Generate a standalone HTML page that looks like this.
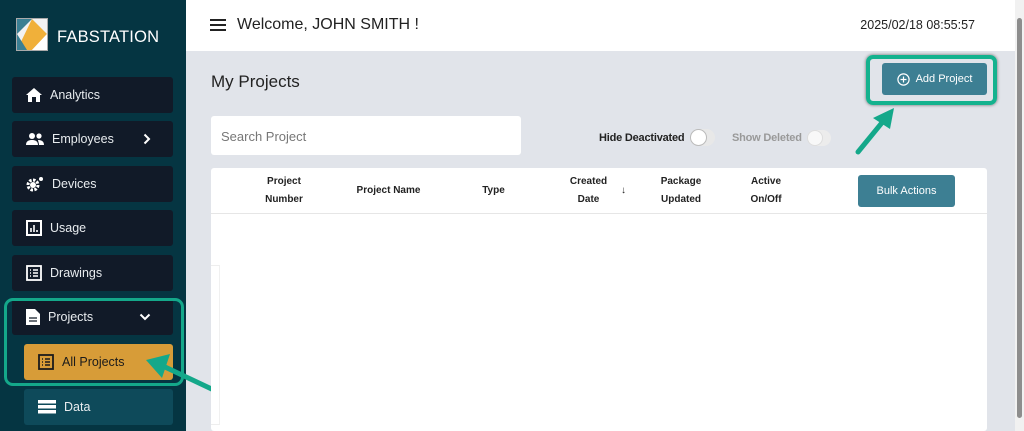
<!DOCTYPE html>
<html><head><style>
*{box-sizing:border-box;margin:0;padding:0}
body{width:1024px;height:431px;overflow:hidden;font-family:"Liberation Sans",sans-serif;background:#e1e4ea;position:relative}
.sb{position:absolute;left:0;top:0;width:186px;height:431px;background:#053542}
.it{position:absolute;left:12px;width:161px;height:36px;background:#111a28;border-radius:3px;color:#e8ecef;font-size:12.5px;display:flex;align-items:center;padding-left:14px}
.it svg{margin-right:8px}
.hdr{position:absolute;left:186px;top:0;right:9px;height:51px;background:#fff}
.abs{position:absolute}
.th{position:absolute;font-size:10px;font-weight:bold;color:#222;text-align:center;line-height:18px}
</style></head><body>
<div class="sb">
 <div class="abs" style="left:16px;top:18px;width:32px;height:33px;background:#fff;border:1px solid #aaa">
  <svg width="30" height="31" viewBox="0 0 30 31"><rect width="30" height="31" fill="#f2f2f2"/><polygon points="0,0 15,0 0,15" fill="#3a7f93"/><polygon points="15,0 0,31 15,31" fill="#f0b03a"/><polygon points="15,0 30,15 15,31" fill="#f0b03a"/><polygon points="0,15 0,31 10,31" fill="#3a7f93"/><polygon points="30,15 30,31 15,31" fill="#fff"/></svg>
 </div>
 <div class="abs" style="left:57px;top:28px;color:#fff;font-size:16.5px;letter-spacing:.2px">FABSTATION</div>
 <div class="it" style="top:77px"><svg width="16" height="14" viewBox="0 0 16 14"><path d="M8 0L0 7h2v7h4V9h4v5h4V7h2z" fill="#fff"/></svg>Analytics</div>
 <div class="it" style="top:121px"><svg width="18" height="12" viewBox="0 0 18 12"><circle cx="6" cy="3" r="3" fill="#fff"/><circle cx="13" cy="3" r="2.6" fill="#fff"/><path d="M0 12c0-4 3-5 6-5s6 1 6 5z M12 7c3 0 6 1 6 5h-5c0-2-1-4-1-5z" fill="#fff"/></svg>Employees<svg style="position:absolute;right:14px" width="8" height="12" viewBox="0 0 8 12"><path d="M1.5 1.5L6 6l-4.5 4.5" fill="none" stroke="#fff" stroke-width="2"/></svg></div>
 <div class="it" style="top:166px"><svg width="18" height="16" viewBox="0 0 18 16"><circle cx="7" cy="9" r="5" fill="none" stroke="#fff" stroke-width="3" stroke-dasharray="2.5 1.4"/><circle cx="7" cy="9" r="3" fill="#fff"/><circle cx="15" cy="3" r="2" fill="#fff"/></svg>Devices</div>
 <div class="it" style="top:210px"><svg width="16" height="16" viewBox="0 0 16 16"><rect x="1" y="1" width="14" height="14" fill="none" stroke="#fff" stroke-width="2"/><path d="M5 12V8M8 12V5M11 12v-2" stroke="#fff" stroke-width="1.6"/></svg>Usage</div>
 <div class="it" style="top:255px"><svg width="16" height="16" viewBox="0 0 16 16"><rect x="1" y="1" width="14" height="14" fill="none" stroke="#fff" stroke-width="1.8"/><path d="M4 5h1M7 5h5M4 8h1M7 8h5M4 11h1M7 11h5" stroke="#fff" stroke-width="1.4"/></svg>Drawings</div>
 <div class="it" style="top:299px"><svg width="14" height="16" viewBox="0 0 14 16"><path d="M0 0h9l5 5v11H0z" fill="#fff"/><path d="M3 9h8M3 12h8" stroke="#111a28" stroke-width="1.3"/></svg>Projects<svg style="position:absolute;right:14px" width="12" height="8" viewBox="0 0 12 8"><path d="M1.5 1.5L6 6l4.5-4.5" fill="none" stroke="#fff" stroke-width="2"/></svg></div>
 <div class="it" style="top:344px;left:24px;width:149px;background:#d79c38;color:#1b1b1b"><svg width="16" height="16" viewBox="0 0 16 16"><rect x="1" y="1" width="14" height="14" fill="none" stroke="#1b1b1b" stroke-width="1.8"/><path d="M4 5h1M7 5h5M4 8h1M7 8h5M4 11h1M7 11h5" stroke="#1b1b1b" stroke-width="1.4"/></svg>All Projects</div>
 <div class="it" style="top:389px;left:24px;width:149px;background:#0e4a5a"><svg width="18" height="14" viewBox="0 0 18 14"><rect x="0" y="0" width="18" height="3.5" fill="#fff"/><rect x="0" y="5" width="18" height="3.5" fill="#fff"/><rect x="0" y="10" width="18" height="3.5" fill="#fff"/></svg>Data</div>
 <div class="abs" style="left:4px;top:298px;width:180px;height:88px;border:3px solid #14a88a;border-radius:9px"></div>
</div>
<div class="hdr">
 <div class="abs" style="left:24px;top:19px;width:16px;height:12px;border-top:2px solid #222;border-bottom:2px solid #222"><div style="margin-top:3px;border-top:2px solid #222"></div></div>
 <div class="abs" style="left:51px;top:16px;font-size:16px;color:#222">Welcome, JOHN SMITH !</div>
 <div class="abs" style="right:40px;top:18px;font-size:12.5px;color:#222">2025/02/18 08:55:57</div>
</div>
<div class="abs" style="right:0;top:0;width:9px;height:431px;background:#f1f1f1"><div style="margin:18px 2px;height:400px;background:#8d8d8d;border-radius:3px"></div></div>
<div class="abs" style="left:211px;top:72px;font-size:17px;color:#222">My Projects</div>
<div class="abs" style="left:866px;top:55px;width:131px;height:50px;border:4px solid #14b28e;border-radius:7px;box-shadow:0 0 3px #666"></div>
<div class="abs" style="left:882px;top:63px;width:105px;height:32px;background:#3d7f93;border-radius:3px;color:#fff;font-size:11px;display:flex;align-items:center;justify-content:center"><svg width="13" height="13" viewBox="0 0 13 13" style="margin-right:6px"><circle cx="6.5" cy="6.5" r="5.6" fill="none" stroke="#fff" stroke-width="1.2"/><path d="M6.5 3.5v6M3.5 6.5h6" stroke="#fff" stroke-width="1.2"/></svg>Add Project</div>
<div class="abs" style="left:211px;top:116px;width:310px;height:39px;background:#fff;border-radius:3px;font-size:13px;color:#777;padding:13px 10px">Search Project</div>
<div class="abs" style="left:599px;top:132px;font-size:11px;font-weight:bold;color:#222;letter-spacing:-.2px">Hide Deactivated</div>
<div class="abs" style="left:690px;top:129px;width:25px;height:17px;border-radius:9px;background:#e8e8e8"><div style="width:17px;height:17px;border-radius:50%;background:#fff;border:1px solid #bbb"></div></div>
<div class="abs" style="left:732px;top:132px;font-size:11px;font-weight:bold;color:#999;letter-spacing:-.2px">Show Deleted</div>
<div class="abs" style="left:807px;top:130px;width:24px;height:16px;border-radius:8px;background:#ececec"><div style="width:16px;height:16px;border-radius:50%;background:#f8f8f8;border:1px solid #ddd"></div></div>
<svg class="abs" style="left:850px;top:105px" width="50" height="52" viewBox="0 0 50 52"><path d="M8 47L35 14" stroke="#14a88a" stroke-width="5" stroke-linecap="round"/><polygon points="44,3 23,13 40,24" fill="#14a88a"/></svg>
<svg class="abs" style="left:140px;top:350px" width="85" height="48" viewBox="0 0 85 48"><path d="M78 42L25 17" stroke="#14a88a" stroke-width="5" stroke-linecap="round"/><polygon points="6,10 30,4 22,28" fill="#14a88a"/></svg>
<div class="abs" style="left:211px;top:168px;width:776px;height:263px;background:#fff;border-radius:3px">
 <div class="abs" style="left:0;top:45px;width:776px;border-top:1px solid #e6e6e6"></div>
 <div class="abs" style="left:0;top:97px;width:9px;height:160px;border-top:1px solid #eee;border-bottom:1px solid #eee;border-right:1px solid #f0f0f0"></div>
 <div class="th" style="left:45px;top:5px;width:56px">Project<br>Number</div>
 <div class="th" style="left:140px;top:14px;width:75px">Project Name</div>
 <div class="th" style="left:265px;top:14px;width:35px">Type</div>
 <div class="th" style="left:355px;top:5px;width:45px">Created<br>Date</div>
 <div class="th" style="left:405px;top:14px;width:15px;font-weight:normal">&#x2193;</div>
 <div class="th" style="left:440px;top:5px;width:60px">Package<br>Updated</div>
 <div class="th" style="left:530px;top:5px;width:50px">Active<br>On/Off</div>
 <div class="abs" style="left:647px;top:7px;width:97px;height:32px;background:#3d7f93;border-radius:3px;color:#fff;font-size:11px;text-align:center;line-height:32px">Bulk Actions</div>
</div>
</body></html>
